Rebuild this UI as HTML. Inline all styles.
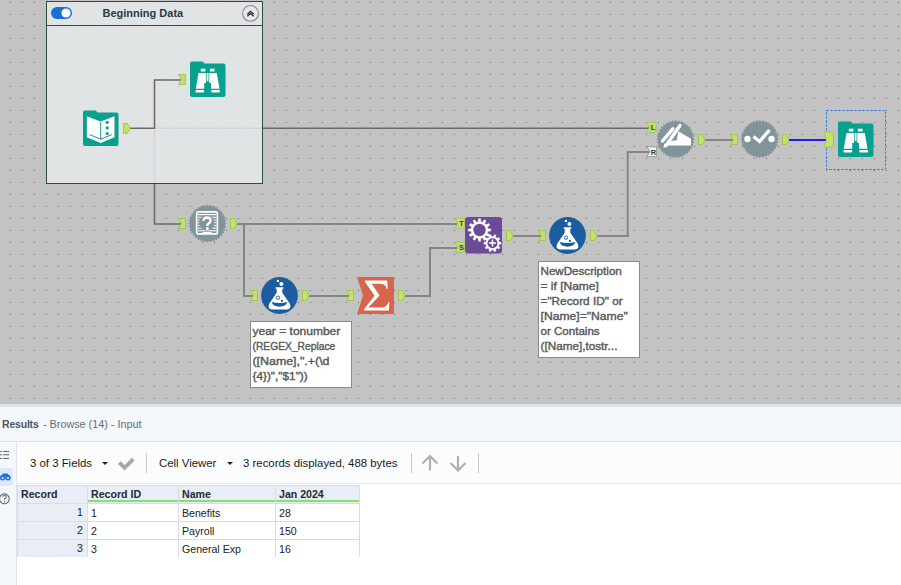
<!DOCTYPE html>
<html><head><meta charset="utf-8"><style>
html,body{margin:0;padding:0;width:901px;height:585px;overflow:hidden;background:#fff;font-family:"Liberation Sans",sans-serif;}
.abs{position:absolute}
</style></head><body>
<div class="abs" style="left:0;top:0;width:901px;height:404px;overflow:hidden">
<svg width="901" height="404" viewBox="0 0 901 404" style="position:absolute;left:0;top:0">
<defs><pattern id="dots" x="10" y="2" width="12" height="12" patternUnits="userSpaceOnUse"><rect x="0" y="0" width="1" height="1" fill="#6c6c6c"/></pattern><pattern id="dots2" x="10" y="2" width="12" height="12" patternUnits="userSpaceOnUse"><rect x="0" y="0" width="1" height="1" fill="#cdd1d3"/></pattern></defs>
<rect width="901" height="404" fill="#c3c3c3"/>
<rect width="901" height="404" fill="url(#dots)" shape-rendering="crispEdges"/>
<path d="M237,224 H457" fill="none" stroke="#858585" stroke-width="2"/>
<path d="M244,224 V296 H253" fill="none" stroke="#858585" stroke-width="2"/>
<path d="M309,296 H349" fill="none" stroke="#858585" stroke-width="2"/>
<path d="M405,296 H430 V248 H457" fill="none" stroke="#858585" stroke-width="2"/>
<path d="M513,236 H541" fill="none" stroke="#858585" stroke-width="2"/>
<path d="M597,236 H627.7 V152 H649" fill="none" stroke="#858585" stroke-width="2"/>
<path d="M705,140 H733" fill="none" stroke="#858585" stroke-width="2"/>
<path d="M262,128.3 H649" fill="none" stroke="#6a6a6a" stroke-width="1.6"/>
<path d="M154.5,184 V224 H181" fill="none" stroke="#6a6a6a" stroke-width="1.6"/>
<rect x="46.5" y="1.5" width="216" height="182" fill="#e1e4e5" stroke="#2e4d4a" stroke-width="1"/>
<rect x="47" y="26" width="215" height="157" fill="url(#dots2)" shape-rendering="crispEdges"/>
<rect x="47" y="2" width="215" height="23" fill="url(#dots2)" shape-rendering="crispEdges"/>
<path d="M154.5,128.3 H262" fill="none" stroke="#d4d7d9" stroke-width="1.6"/>
<path d="M154.5,128.3 V183" fill="none" stroke="#d4d7d9" stroke-width="1.6"/>
<path d="M47,25.5 H262" stroke="#2e4d4a" stroke-width="1"/>
<path d="M130,128.3 H154.5 V80 H181" fill="none" stroke="#6a6a6a" stroke-width="1.6"/>
<rect x="51" y="7" width="21" height="12" rx="6" fill="#1a6fd4"/><circle cx="66" cy="13" r="4.6" fill="#fff"/>
<circle cx="250.5" cy="13.4" r="7.9" fill="#e6e8ee" stroke="#888" stroke-width="1.1"/>
<path d="M247.3,14.3 L250.5,11.3 L253.7,14.3 M247.3,16.3 L250.5,13.6 L253.7,16.3" fill="none" stroke="#333" stroke-width="1.3"/>
<text x="102.5" y="17" font-family="Liberation Sans" font-weight="bold" font-size="11" fill="#263b47">Beginning Data</text>
<g transform="translate(83,110)"><path d="M0,2.5 Q0,0.5 2,0.5 H13 L14.2,2.6 H33.5 Q35.5,2.6 35.5,4.6 V34 Q35.5,36 33.5,36 H2 Q0,36 0,34 Z" fill="#09a08f"/><path d="M3.85,6.15 L17.5,11.5 L31.5,6.15 V27.3 L17.7,33.1 L3.85,27.3 Z" fill="#fff"/><path d="M17.7,11.8 V29.2 M6.5,24.6 L17.7,29.2 L28.8,24.6" fill="none" stroke="#09a08f" stroke-width="1"/><circle cx="24.2" cy="12.3" r="1.6" fill="#09a08f"/><circle cx="24.2" cy="17.9" r="1.6" fill="#09a08f"/><circle cx="24.2" cy="23.5" r="1.6" fill="#09a08f"/></g>
<path d="M123.5,123.5 H127.3 L130,128.5 L127.3,133.5 H123.5 Z" fill="#c3e26b" stroke="#a3c24e" stroke-width="0.9" stroke-linejoin="round"/>
<g transform="translate(190,61)"><path d="M0,2.5 Q0,0.5 2,0.5 H13 L14.2,2.6 H33.5 Q35.5,2.6 35.5,4.6 V34 Q35.5,36 33.5,36 H2 Q0,36 0,34 Z" fill="#09a08f"/><rect x="10.8" y="7.7" width="4.6" height="2.8" fill="#fff"/><rect x="19.9" y="7.7" width="4.6" height="2.8" fill="#fff"/><path d="M8.5,12.1 H15.9 V22.1 H14.2 V27.8 H5.8 Z" fill="#fff"/><path d="M26.8,12.1 H19.3 V22.1 H21.1 V27.8 H29.5 Z" fill="#fff"/><rect x="16.7" y="12.1" width="1.8" height="8" fill="#fff"/><rect x="5.4" y="29" width="8.8" height="2.4" rx="1" fill="#fff"/><rect x="21.2" y="29" width="8.8" height="2.4" rx="1" fill="#fff"/></g>
<path d="M178.5,74.5 H185.5 V84.5 H178.5 L181.5,79.5 Z" fill="#c3e26b" stroke="#a3c24e" stroke-width="0.9" stroke-linejoin="round"/>
<path d="M226.70,223.50 L224.73,225.01 L226.41,226.83 L224.21,227.98 L225.54,230.07 L223.18,230.81 L224.13,233.10 L221.67,233.42 L222.21,235.84 L219.73,235.73 L219.84,238.21 L217.42,237.67 L217.10,240.13 L214.81,239.18 L214.07,241.54 L211.98,240.21 L210.83,242.41 L209.01,240.73 L207.50,242.70 L205.99,240.73 L204.17,242.41 L203.02,240.21 L200.93,241.54 L200.19,239.18 L197.90,240.13 L197.58,237.67 L195.16,238.21 L195.27,235.73 L192.79,235.84 L193.33,233.42 L190.87,233.10 L191.82,230.81 L189.46,230.07 L190.79,227.98 L188.59,226.83 L190.27,225.01 L188.30,223.50 L190.27,221.99 L188.59,220.17 L190.79,219.02 L189.46,216.93 L191.82,216.19 L190.87,213.90 L193.33,213.58 L192.79,211.16 L195.27,211.27 L195.16,208.79 L197.58,209.33 L197.90,206.87 L200.19,207.82 L200.93,205.46 L203.02,206.79 L204.17,204.59 L205.99,206.27 L207.50,204.30 L209.01,206.27 L210.83,204.59 L211.98,206.79 L214.07,205.46 L214.81,207.82 L217.10,206.87 L217.42,209.33 L219.84,208.79 L219.73,211.27 L222.21,211.16 L221.67,213.58 L224.13,213.90 L223.18,216.19 L225.54,216.93 L224.21,219.02 L226.41,220.17 L224.73,221.99Z" fill="#80949a"/>
<rect x="196.6" y="211.9" width="20.8" height="22" rx="2" fill="none" stroke="#fff" stroke-width="1.6"/>
<path d="M197.5,214.6 H216.5" stroke="#fff" stroke-width="1.3"/>
<path d="M197.5,217.3 H216.5" stroke="#fff" stroke-width="1"/>
<path d="M197.5,220 H216.5" stroke="#fff" stroke-width="1"/>
<path d="M197.5,222.7 H216.5" stroke="#fff" stroke-width="1"/>
<path d="M197.5,225.4 H216.5" stroke="#fff" stroke-width="1"/>
<path d="M197.5,228.1 H216.5" stroke="#fff" stroke-width="1"/>
<path d="M197.5,230.8 H216.5" stroke="#fff" stroke-width="1"/>
<circle cx="206.8" cy="222.8" r="7.6" fill="#80949a"/>
<path d="M202.5,232.6 H211.5" stroke="#fff" stroke-width="1.2"/>
<path d="M203.6,221 Q203.4,217.6 207,217.5 Q210.6,217.6 210.6,220.6 Q210.6,222.5 208.6,223.5 Q207.3,224.2 207.3,225.9" fill="none" stroke="#fff" stroke-width="2.3"/><rect x="206" y="227.3" width="2.6" height="2.5" fill="#fff"/>
<path d="M178.5,218.5 H185.5 V228.5 H178.5 L181.5,223.5 Z" fill="#c3e26b" stroke="#a3c24e" stroke-width="0.9" stroke-linejoin="round"/>
<path d="M230.5,218.5 H234.3 L237,223.5 L234.3,228.5 H230.5 Z" fill="#c3e26b" stroke="#a3c24e" stroke-width="0.9" stroke-linejoin="round"/>
<circle cx="279.5" cy="295.5" r="18.4" fill="#1b5d9f"/><g transform="translate(279.5,295.5)"><path d="M-3.9,-8.3 H3.9 V-6.7 H2.8 V-2.8 L10.3,8.3 Q12.6,13.6 7.3,14.1 H-7.3 Q-12.6,13.6 -10.3,8.3 L-2.8,-2.8 V-6.7 H-3.9 Z" fill="#fff"/><path d="M-7.9,6.6 Q0,8.6 7.9,6.6 Q6.6,11.2 0,11.3 Q-6.6,11.2 -7.9,6.6 Z" fill="#1b5d9f"/><circle cx="-1.5" cy="2.2" r="1.7" fill="none" stroke="#1b5d9f" stroke-width="0.9"/><circle cx="2.4" cy="5.3" r="1.1" fill="#1b5d9f"/><circle cx="-1.6" cy="-14.6" r="1.2" fill="#fff"/><circle cx="1.9" cy="-11.6" r="2" fill="#fff"/></g>
<path d="M250.5,290.5 H257.5 V300.5 H250.5 L253.5,295.5 Z" fill="#c3e26b" stroke="#a3c24e" stroke-width="0.9" stroke-linejoin="round"/>
<path d="M302.5,290.5 H306.3 L309,295.5 L306.3,300.5 H302.5 Z" fill="#c3e26b" stroke="#a3c24e" stroke-width="0.9" stroke-linejoin="round"/>
<path d="M357,277 H394 V314 H357 L363,295.5 Z" fill="#d8654b"/>
<path d="M365,280.5 H387.2 L387.8,289 H386.8 Q385.8,284.2 381,283.8 H371.6 L379.6,295.5 L368.2,307.4 H382 Q387,307 388.4,302.2 H389.4 L388.8,310.5 H364 V309.2 L374.6,295.8 L365,282 Z" fill="#fff"/>
<path d="M346.5,290.5 H353.5 V300.5 H346.5 L349.5,295.5 Z" fill="#c3e26b" stroke="#a3c24e" stroke-width="0.9" stroke-linejoin="round"/>
<path d="M398.5,290.5 H402.3 L405,295.5 L402.3,300.5 H398.5 Z" fill="#c3e26b" stroke="#a3c24e" stroke-width="0.9" stroke-linejoin="round"/>
<rect x="465" y="217" width="37" height="36.5" rx="3" fill="#6b4b98"/>
<path d="M487.61,227.83 L487.81,228.77 L490.76,229.00 L490.76,231.00 L487.81,231.23 L487.61,232.17 L487.31,233.09 L489.75,234.76 L488.75,236.50 L486.08,235.22 L485.44,235.94 L484.72,236.58 L486.00,239.25 L484.26,240.25 L482.59,237.81 L481.67,238.11 L480.73,238.31 L480.50,241.26 L478.50,241.26 L478.27,238.31 L477.33,238.11 L476.41,237.81 L474.74,240.25 L473.00,239.25 L474.28,236.58 L473.56,235.94 L472.92,235.22 L470.25,236.50 L469.25,234.76 L471.69,233.09 L471.39,232.17 L471.19,231.23 L468.24,231.00 L468.24,229.00 L471.19,228.77 L471.39,227.83 L471.69,226.91 L469.25,225.24 L470.25,223.50 L472.92,224.78 L473.56,224.06 L474.28,223.42 L473.00,220.75 L474.74,219.75 L476.41,222.19 L477.33,221.89 L478.27,221.69 L478.50,218.74 L480.50,218.74 L480.73,221.69 L481.67,221.89 L482.59,222.19 L484.26,219.75 L486.00,220.75 L484.72,223.42 L485.44,224.06 L486.08,224.78 L488.75,223.50 L489.75,225.24 L487.31,226.91Z" fill="#fff" stroke="#fff" stroke-width="0.5" stroke-linejoin="round"/><circle cx="479.5" cy="230" r="6.2" fill="#6b4b98"/>
<path d="M498.78,241.16 L499.00,242.04 L501.05,242.28 L501.05,244.12 L499.00,244.36 L498.78,245.24 L498.44,246.08 L499.96,247.48 L498.88,248.97 L497.08,247.95 L496.38,248.54 L495.61,249.02 L496.01,251.05 L494.27,251.62 L493.41,249.74 L492.50,249.80 L491.59,249.74 L490.73,251.62 L488.99,251.05 L489.39,249.02 L488.62,248.54 L487.92,247.95 L486.12,248.97 L485.04,247.48 L486.56,246.08 L486.22,245.24 L486.00,244.36 L483.95,244.12 L483.95,242.28 L486.00,242.04 L486.22,241.16 L486.56,240.32 L485.04,238.92 L486.12,237.43 L487.92,238.45 L488.62,237.86 L489.39,237.38 L488.99,235.35 L490.73,234.78 L491.59,236.66 L492.50,236.60 L493.41,236.66 L494.27,234.78 L496.01,235.35 L495.61,237.38 L496.38,237.86 L497.08,238.45 L498.88,237.43 L499.96,238.92 L498.44,240.32Z" fill="#fff" stroke="#fff" stroke-width="0.5" stroke-linejoin="round"/><circle cx="492.5" cy="243.2" r="5" fill="#6b4b98"/>
<path d="M492.5,239.5 V246.5 M489,243 H496" stroke="#fff" stroke-width="1.6"/>
<path d="M454.9,218.4 h9.7 v9.7 h-9.7 l3.2,-4.85 z" fill="#c3e26b" stroke="#a3c24e" stroke-width="0.8" stroke-linejoin="round"/><text x="461.5" y="226.2" text-anchor="middle" font-family="Liberation Sans" font-weight="bold" font-size="7.4" fill="#1f4444">T</text>
<path d="M454.9,242.4 h9.7 v9.7 h-9.7 l3.2,-4.85 z" fill="#c3e26b" stroke="#a3c24e" stroke-width="0.8" stroke-linejoin="round"/><text x="461.5" y="250.2" text-anchor="middle" font-family="Liberation Sans" font-weight="bold" font-size="7.4" fill="#1f4444">S</text>
<path d="M506.5,230.5 H510.3 L513,235.5 L510.3,240.5 H506.5 Z" fill="#c3e26b" stroke="#a3c24e" stroke-width="0.9" stroke-linejoin="round"/>
<circle cx="567.5" cy="235.5" r="18.4" fill="#1b5d9f"/><g transform="translate(567.5,235.5)"><path d="M-3.9,-8.3 H3.9 V-6.7 H2.8 V-2.8 L10.3,8.3 Q12.6,13.6 7.3,14.1 H-7.3 Q-12.6,13.6 -10.3,8.3 L-2.8,-2.8 V-6.7 H-3.9 Z" fill="#fff"/><path d="M-7.9,6.6 Q0,8.6 7.9,6.6 Q6.6,11.2 0,11.3 Q-6.6,11.2 -7.9,6.6 Z" fill="#1b5d9f"/><circle cx="-1.5" cy="2.2" r="1.7" fill="none" stroke="#1b5d9f" stroke-width="0.9"/><circle cx="2.4" cy="5.3" r="1.1" fill="#1b5d9f"/><circle cx="-1.6" cy="-14.6" r="1.2" fill="#fff"/><circle cx="1.9" cy="-11.6" r="2" fill="#fff"/></g>
<path d="M538.5,230.5 H545.5 V240.5 H538.5 L541.5,235.5 Z" fill="#c3e26b" stroke="#a3c24e" stroke-width="0.9" stroke-linejoin="round"/>
<path d="M590.5,230.5 H594.3 L597,235.5 L594.3,240.5 H590.5 Z" fill="#c3e26b" stroke="#a3c24e" stroke-width="0.9" stroke-linejoin="round"/>
<path d="M694.70,139.20 L692.73,140.71 L694.41,142.53 L692.21,143.68 L693.54,145.77 L691.18,146.51 L692.13,148.80 L689.67,149.12 L690.21,151.54 L687.73,151.43 L687.84,153.91 L685.42,153.37 L685.10,155.83 L682.81,154.88 L682.07,157.24 L679.98,155.91 L678.83,158.11 L677.01,156.43 L675.50,158.40 L673.99,156.43 L672.17,158.11 L671.02,155.91 L668.93,157.24 L668.19,154.88 L665.90,155.83 L665.58,153.37 L663.16,153.91 L663.27,151.43 L660.79,151.54 L661.33,149.12 L658.87,148.80 L659.82,146.51 L657.46,145.77 L658.79,143.68 L656.59,142.53 L658.27,140.71 L656.30,139.20 L658.27,137.69 L656.59,135.87 L658.79,134.72 L657.46,132.63 L659.82,131.89 L658.87,129.60 L661.33,129.28 L660.79,126.86 L663.27,126.97 L663.16,124.49 L665.58,125.03 L665.90,122.57 L668.19,123.52 L668.93,121.16 L671.02,122.49 L672.17,120.29 L673.99,121.97 L675.50,120.00 L677.01,121.97 L678.83,120.29 L679.98,122.49 L682.07,121.16 L682.81,123.52 L685.10,122.57 L685.42,125.03 L687.84,124.49 L687.73,126.97 L690.21,126.86 L689.67,129.28 L692.13,129.60 L691.18,131.89 L693.54,132.63 L692.21,134.72 L694.41,135.87 L692.73,137.69Z" fill="#80949a"/>
<path d="M662.5,141 L673,128.7" stroke="#fff" stroke-width="3.4" stroke-linecap="round"/><path d="M666,145.5 L680,125.5" stroke="#fff" stroke-width="3.4" stroke-linecap="round"/><path d="M663.5,148.3 L664.2,143.5 L667.5,145.8Z" fill="#fff"/><path d="M678.3,131.3 L691,138.8 V145.4 H668 V142.4 L672.5,140.8 L676.8,140.3 L677.5,135.5Z" fill="#fff"/>
<path d="M646.4,122.4 h9.7 v9.7 h-9.7 l3.2,-4.85 z" fill="#c3e26b" stroke="#a3c24e" stroke-width="0.8" stroke-linejoin="round"/><text x="653" y="130.2" text-anchor="middle" font-family="Liberation Sans" font-weight="bold" font-size="7.4" fill="#1f4444">L</text>
<path d="M646.9,146.9 h9.7 v9.7 h-9.7 l3.2,-4.85 z" fill="#f4f4f4" stroke="#8a8a8a" stroke-width="0.8" stroke-linejoin="round"/><text x="653.5" y="154.7" text-anchor="middle" font-family="Liberation Sans" font-weight="bold" font-size="7.4" fill="#1f4444">R</text>
<path d="M698.5,134.5 H702.3 L705,139.5 L702.3,144.5 H698.5 Z" fill="#c3e26b" stroke="#a3c24e" stroke-width="0.9" stroke-linejoin="round"/>
<path d="M778.90,139.00 L776.93,140.51 L778.61,142.33 L776.41,143.48 L777.74,145.57 L775.38,146.31 L776.33,148.60 L773.87,148.92 L774.41,151.34 L771.93,151.23 L772.04,153.71 L769.62,153.17 L769.30,155.63 L767.01,154.68 L766.27,157.04 L764.18,155.71 L763.03,157.91 L761.21,156.23 L759.70,158.20 L758.19,156.23 L756.37,157.91 L755.22,155.71 L753.13,157.04 L752.39,154.68 L750.10,155.63 L749.78,153.17 L747.36,153.71 L747.47,151.23 L744.99,151.34 L745.53,148.92 L743.07,148.60 L744.02,146.31 L741.66,145.57 L742.99,143.48 L740.79,142.33 L742.47,140.51 L740.50,139.00 L742.47,137.49 L740.79,135.67 L742.99,134.52 L741.66,132.43 L744.02,131.69 L743.07,129.40 L745.53,129.08 L744.99,126.66 L747.47,126.77 L747.36,124.29 L749.78,124.83 L750.10,122.37 L752.39,123.32 L753.13,120.96 L755.22,122.29 L756.37,120.09 L758.19,121.77 L759.70,119.80 L761.21,121.77 L763.03,120.09 L764.18,122.29 L766.27,120.96 L767.01,123.32 L769.30,122.37 L769.62,124.83 L772.04,124.29 L771.93,126.77 L774.41,126.66 L773.87,129.08 L776.33,129.40 L775.38,131.69 L777.74,132.43 L776.41,134.52 L778.61,135.67 L776.93,137.49Z" fill="#80949a"/>
<circle cx="747.5" cy="139" r="3.2" fill="#fff"/><circle cx="771.5" cy="139" r="3.2" fill="#fff"/><path d="M753.5,136.5 L759.5,141.5 L769.5,130" fill="none" stroke="#fff" stroke-width="3.4"/>
<path d="M730.5,134.5 H737.5 V144.5 H730.5 L733.5,139.5 Z" fill="#c3e26b" stroke="#a3c24e" stroke-width="0.9" stroke-linejoin="round"/>
<path d="M782.5,134.5 H786.3 L789,139.5 L786.3,144.5 H782.5 Z" fill="#c3e26b" stroke="#a3c24e" stroke-width="0.9" stroke-linejoin="round"/>
<path d="M789,140 H826" stroke="#2121dc" stroke-width="2.2"/>
<rect x="826.5" y="110.5" width="59" height="59" fill="none" stroke="#1e78e0" stroke-width="1" stroke-dasharray="2.2,1.8"/>
<g transform="translate(838,121)"><path d="M0,2.5 Q0,0.5 2,0.5 H13 L14.2,2.6 H33.5 Q35.5,2.6 35.5,4.6 V34 Q35.5,36 33.5,36 H2 Q0,36 0,34 Z" fill="#09a08f"/><rect x="10.8" y="7.7" width="4.6" height="2.8" fill="#fff"/><rect x="19.9" y="7.7" width="4.6" height="2.8" fill="#fff"/><path d="M8.5,12.1 H15.9 V22.1 H14.2 V27.8 H5.8 Z" fill="#fff"/><path d="M26.8,12.1 H19.3 V22.1 H21.1 V27.8 H29.5 Z" fill="#fff"/><rect x="16.7" y="12.1" width="1.8" height="8" fill="#fff"/><rect x="5.4" y="29" width="8.8" height="2.4" rx="1" fill="#fff"/><rect x="21.2" y="29" width="8.8" height="2.4" rx="1" fill="#fff"/></g>
<path d="M823.5,132.0 H833.5 V147.0 H823.5 L826.5,139.5 Z" fill="#c3e26b" stroke="#a3c24e" stroke-width="0.9" stroke-linejoin="round"/>
<rect x="250.5" y="321.5" width="101" height="66" fill="#fff" stroke="#8a8a8a" stroke-width="1"/><text x="252.5" y="334.5" textLength="87.8" lengthAdjust="spacingAndGlyphs" font-family="Liberation Sans" font-size="11" fill="#5a5a5a" stroke="#5a5a5a" stroke-width="0.4">year = tonumber</text><text x="252.5" y="349.5" textLength="82.8" lengthAdjust="spacingAndGlyphs" font-family="Liberation Sans" font-size="11" fill="#5a5a5a" stroke="#5a5a5a" stroke-width="0.4">(REGEX_Replace</text><text x="252.5" y="364.5" textLength="77" lengthAdjust="spacingAndGlyphs" font-family="Liberation Sans" font-size="11" fill="#5a5a5a" stroke="#5a5a5a" stroke-width="0.4">([Name],&quot;.+(\d</text><text x="252.5" y="379.5" textLength="55.2" lengthAdjust="spacingAndGlyphs" font-family="Liberation Sans" font-size="11" fill="#5a5a5a" stroke="#5a5a5a" stroke-width="0.4">{4})&quot;,&quot;$1&quot;))</text>
<rect x="538.5" y="261.5" width="101" height="96" fill="#fff" stroke="#8a8a8a" stroke-width="1"/><text x="540.5" y="275" textLength="81.3" lengthAdjust="spacingAndGlyphs" font-family="Liberation Sans" font-size="11" fill="#5a5a5a" stroke="#5a5a5a" stroke-width="0.4">NewDescription</text><text x="540.5" y="290" textLength="58.3" lengthAdjust="spacingAndGlyphs" font-family="Liberation Sans" font-size="11" fill="#5a5a5a" stroke="#5a5a5a" stroke-width="0.4">= if [Name]</text><text x="540.5" y="305" textLength="82.2" lengthAdjust="spacingAndGlyphs" font-family="Liberation Sans" font-size="11" fill="#5a5a5a" stroke="#5a5a5a" stroke-width="0.4">=&quot;Record ID&quot; or</text><text x="540.5" y="320" textLength="87.3" lengthAdjust="spacingAndGlyphs" font-family="Liberation Sans" font-size="11" fill="#5a5a5a" stroke="#5a5a5a" stroke-width="0.4">[Name]=&quot;Name&quot;</text><text x="540.5" y="335" textLength="59.1" lengthAdjust="spacingAndGlyphs" font-family="Liberation Sans" font-size="11" fill="#5a5a5a" stroke="#5a5a5a" stroke-width="0.4">or Contains</text><text x="540.5" y="350" textLength="76.9" lengthAdjust="spacingAndGlyphs" font-family="Liberation Sans" font-size="11" fill="#5a5a5a" stroke="#5a5a5a" stroke-width="0.4">([Name],tostr...</text>
</svg>
</div>
<div class="abs" style="left:0;top:404px;width:901px;height:3px;background:#dfe5f0"></div>
<div class="abs" style="left:0;top:407px;width:901px;height:178px;background:#f4f7fb"></div>
<div class="abs" style="left:2px;top:417.5px;font-size:10.5px;font-weight:bold;letter-spacing:-0.2px;color:#4a5866;white-space:pre">Results</div>
<div class="abs" style="left:43px;top:417.5px;font-size:10.8px;color:#5f6e7c;white-space:pre">- Browse (14) - Input</div>
<div class="abs" style="left:0;top:441px;width:901px;height:1px;background:#dde3ec"></div>
<div class="abs" style="left:16px;top:441px;width:1px;height:144px;background:#dde3ec"></div>
<div class="abs" style="left:17px;top:442px;width:884px;height:41px;background:#fbfcfe"></div>
<div class="abs" style="left:17px;top:483px;width:884px;height:1px;background:#e6eaf0"></div>
<div class="abs" style="left:17px;top:484px;width:884px;height:101px;background:#fff"></div>
<svg class="abs" style="left:0;top:445px" width="16" height="70"><path d="M0,6.5 H1.8 M3.2,6.5 H9 M0,9.8 H1.8 M3.2,9.8 H9 M0,13.5 H1.8 M3.2,13.5 H9" stroke="#56616c" stroke-width="1.1"/><rect x="-2" y="23" width="14.7" height="17.8" rx="2" fill="#dbe8fa"/><circle cx="2.6" cy="32.8" r="2.7" fill="#1f6fd0"/><circle cx="8" cy="32.8" r="2.7" fill="#1f6fd0"/><path d="M1.2,31 L3,28.6 H7.6 L9.4,31 Z" fill="#1f6fd0"/><circle cx="2.6" cy="33" r="1.1" fill="#dbe8fa"/><circle cx="8" cy="33" r="1.1" fill="#dbe8fa"/><circle cx="4.4" cy="53.8" r="4.9" fill="none" stroke="#5f6872" stroke-width="1.1"/><path d="M2.8,52.3 Q2.8,50.3 4.5,50.3 Q6.2,50.3 6.2,52 Q6.2,53.2 4.5,54 V55" fill="none" stroke="#5f6872" stroke-width="1.1"/><circle cx="4.5" cy="56.7" r="0.7" fill="#5f6872"/></svg>
<div class="abs" style="left:30px;top:456.5px;font-size:11.4px;color:#1b1b1b;white-space:pre;">3 of 3 Fields</div>
<svg class="abs" style="left:100px;top:445px" width="400" height="35"><path d="M2,17 H8 L5,20Z" fill="#222"/><path d="M19.3,17.6 L24.6,22.8 L33.2,14.2" fill="none" stroke="#a6a6a6" stroke-width="3.8"/><path d="M46.5,8 V28" stroke="#c8c8c8" stroke-width="1"/><path d="M127,17 H133 L130,20Z" fill="#222"/><path d="M311.5,8 V28" stroke="#c8c8c8" stroke-width="1"/><path d="M322.5,18.5 L330,11 L337.5,18.5 M330,11 V25.5" fill="none" stroke="#b0b0b0" stroke-width="2.2"/><path d="M350.5,18 L358,25.5 L365.5,18 M358,25.5 V11" fill="none" stroke="#b0b0b0" stroke-width="2.2"/><path d="M378.5,8 V28" stroke="#c8c8c8" stroke-width="1"/></svg>
<div class="abs" style="left:159px;top:456.5px;font-size:11.4px;color:#1b1b1b;white-space:pre;">Cell Viewer</div>
<div class="abs" style="left:243px;top:456.5px;font-size:11.4px;color:#1b1b1b;white-space:pre;">3 records displayed, 488 bytes</div>
<div class="abs" style="left:17px;top:485px;width:343px;height:72px;background:#d6dde9"></div>
<div class="abs" style="left:18px;top:486px;width:69px;height:17px;background:#e8edf6"></div>
<div class="abs" style="left:21px;top:488px;font-size:10.6px;font-weight:bold;color:#1e2a36;white-space:pre">Record</div>
<div class="abs" style="left:88px;top:486px;width:90px;height:17px;background:#e8edf6"></div>
<div class="abs" style="left:91px;top:488px;font-size:10.6px;font-weight:bold;color:#1e2a36;white-space:pre">Record ID</div>
<div class="abs" style="left:88px;top:500px;width:90px;height:2px;background:#86e06e"></div>
<div class="abs" style="left:179px;top:486px;width:96px;height:17px;background:#e8edf6"></div>
<div class="abs" style="left:182px;top:488px;font-size:10.6px;font-weight:bold;color:#1e2a36;white-space:pre">Name</div>
<div class="abs" style="left:179px;top:500px;width:96px;height:2px;background:#86e06e"></div>
<div class="abs" style="left:276px;top:486px;width:83px;height:17px;background:#e8edf6"></div>
<div class="abs" style="left:279px;top:488px;font-size:10.6px;font-weight:bold;color:#1e2a36;white-space:pre">Jan 2024</div>
<div class="abs" style="left:276px;top:500px;width:83px;height:2px;background:#86e06e"></div>
<div class="abs" style="left:18px;top:504px;width:69px;height:17px;background:#e8edf6"></div>
<div class="abs" style="left:18px;top:506px;width:65px;text-align:right;font-size:10.6px;color:#222;white-space:pre">1</div>
<div class="abs" style="left:88px;top:504px;width:90px;height:17px;background:#fff"></div>
<div class="abs" style="left:91px;top:507px;font-size:10.6px;color:#222;white-space:pre">1</div>
<div class="abs" style="left:179px;top:504px;width:96px;height:17px;background:#fff"></div>
<div class="abs" style="left:182px;top:507px;font-size:10.6px;color:#222;white-space:pre">Benefits</div>
<div class="abs" style="left:276px;top:504px;width:83px;height:17px;background:#fff"></div>
<div class="abs" style="left:279px;top:507px;font-size:10.6px;color:#222;white-space:pre">28</div>
<div class="abs" style="left:18px;top:522px;width:69px;height:17px;background:#e8edf6"></div>
<div class="abs" style="left:18px;top:524px;width:65px;text-align:right;font-size:10.6px;color:#222;white-space:pre">2</div>
<div class="abs" style="left:88px;top:522px;width:90px;height:17px;background:#fff"></div>
<div class="abs" style="left:91px;top:525px;font-size:10.6px;color:#222;white-space:pre">2</div>
<div class="abs" style="left:179px;top:522px;width:96px;height:17px;background:#fff"></div>
<div class="abs" style="left:182px;top:525px;font-size:10.6px;color:#222;white-space:pre">Payroll</div>
<div class="abs" style="left:276px;top:522px;width:83px;height:17px;background:#fff"></div>
<div class="abs" style="left:279px;top:525px;font-size:10.6px;color:#222;white-space:pre">150</div>
<div class="abs" style="left:18px;top:540px;width:69px;height:17px;background:#e8edf6"></div>
<div class="abs" style="left:18px;top:542px;width:65px;text-align:right;font-size:10.6px;color:#222;white-space:pre">3</div>
<div class="abs" style="left:88px;top:540px;width:90px;height:17px;background:#fff"></div>
<div class="abs" style="left:91px;top:543px;font-size:10.6px;color:#222;white-space:pre">3</div>
<div class="abs" style="left:179px;top:540px;width:96px;height:17px;background:#fff"></div>
<div class="abs" style="left:182px;top:543px;font-size:10.6px;color:#222;white-space:pre">General Exp</div>
<div class="abs" style="left:276px;top:540px;width:83px;height:17px;background:#fff"></div>
<div class="abs" style="left:279px;top:543px;font-size:10.6px;color:#222;white-space:pre">16</div>
</body></html>
